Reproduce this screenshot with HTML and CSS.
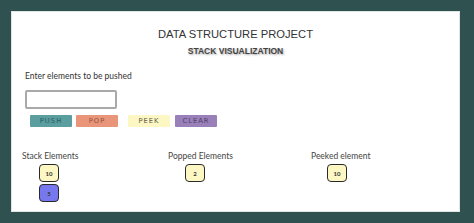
FILE: index.html
```html
<!doctype html>
<html lang="en">
  <head>
    <meta charset="UTF-8" />
    <title>Stack Visualization</title>
    <link rel="stylesheet" href="styles.css">
  </head>
  <body>
    <div class="container">
      <h1>DATA STRUCTURE PROJECT</h1>
      <h2>STACK VISUALIZATION</h2>

      <div class="controls">
        <label class="label" for="value">Enter elements to be pushed</label>
        <input id="value" class="input" type="text" />
        <div class="buttons">
          <button class="btn push">PUSH</button>
          <button class="btn pop">POP</button>
          <button class="btn peek">PEEK</button>
          <button class="btn clear">CLEAR</button>
        </div>
      </div>

      <div class="results">
        <div class="column stack-col">
          <div class="col-title">Stack Elements</div>
          <div class="cells">
            <div class="cell">10</div>
            <div class="cell bottom">5</div>
          </div>
        </div>
        <div class="column popped-col">
          <div class="col-title">Popped Elements</div>
          <div class="cells">
            <div class="cell">2</div>
          </div>
        </div>
        <div class="column peeked-col">
          <div class="col-title">Peeked element</div>
          <div class="cells">
            <div class="cell">10</div>
          </div>
        </div>
      </div>
    </div>
  </body>
</html>
```

FILE: styles.css
```css
body {
  margin: 0;
  padding: 11px 14px 11px 11px;
  background: #2f5150;
  font-family: 'Lato', 'Open Sans', sans-serif;
  height: 223px;
  box-sizing: border-box;
}

.container {
  background: #fff;
  height: 201px;
  box-sizing: border-box;
  padding: 15px 0 0 0;
  border: 1px solid #dfe6e5;
}

h1 {
  margin: 0;
  text-align: center;
  font-family: 'Liberation Sans', Arial, sans-serif;
  font-weight: normal;
  font-size: 11.2px;
  color: #333;
  line-height: 14px;
}

h2 {
  margin: 5px 0 0;
  text-align: center;
  font-family: 'Liberation Sans', Arial, sans-serif;
  font-size: 8.5px;
  font-weight: bold;
  color: #444;
  line-height: 11px;
  text-shadow: 1px 1px 2px rgba(0, 0, 0, 0.35);
}

.controls {
  display: flex;
  flex-direction: column;
  align-items: flex-start;
  padding-left: 13px;
  margin-top: 14px;
}

.label {
  font-size: 8.5px;
  color: #333;
  line-height: 11px;
}

.input {
  margin-top: 8px;
  width: 92px;
  height: 19px;
  box-sizing: border-box;
  border: 2px solid #a9a9a9;
  border-radius: 2px;
  padding: 0;
}

.buttons {
  display: flex;
  margin-top: 6px;
  margin-left: 5px;
}

.btn {
  width: 42px;
  height: 12px;
  padding: 0;
  border: none;
  border-radius: 1px;
  font-family: 'DejaVu Sans', sans-serif;
  font-size: 6.8px;
  letter-spacing: 1px;
  margin-right: 4px;
}

.push {
  background: #5a9ea0;
  color: #2b5c60;
}

.pop {
  background: #e9957a;
  color: #94503c;
  margin-right: 10px;
}

.peek {
  background: #fdf7c4;
  color: #5c5a48;
  margin-right: 5px;
}

.clear {
  background: #9a80b8;
  color: #51406a;
}

.results {
  display: flex;
  margin-top: 24px;
  padding-left: 10px;
}

.column {
  display: flex;
  flex-direction: column;
}

.stack-col {
  width: 146px;
}

.popped-col {
  width: 143px;
}

.col-title {
  font-size: 8.5px;
  color: #444;
  line-height: 11px;
  white-space: nowrap;
}

.cells {
  display: flex;
  flex-direction: column;
  gap: 2px;
  margin-top: 2px;
}

.stack-col .cells {
  margin-left: 17px;
}

.popped-col .cells {
  margin-left: 17px;
}

.peeked-col .cells {
  margin-left: 16px;
}

.cell {
  width: 20px;
  height: 18px;
  box-sizing: border-box;
  background: #fdf7c4;
  border: 1.5px solid #2a2a2a;
  border-radius: 4px;
  display: flex;
  align-items: center;
  justify-content: center;
  font-family: 'Lato', sans-serif;
  font-weight: bold;
  font-size: 6px;
  color: #333;
}

.cell.bottom {
  background: #7878ee;
}
```
